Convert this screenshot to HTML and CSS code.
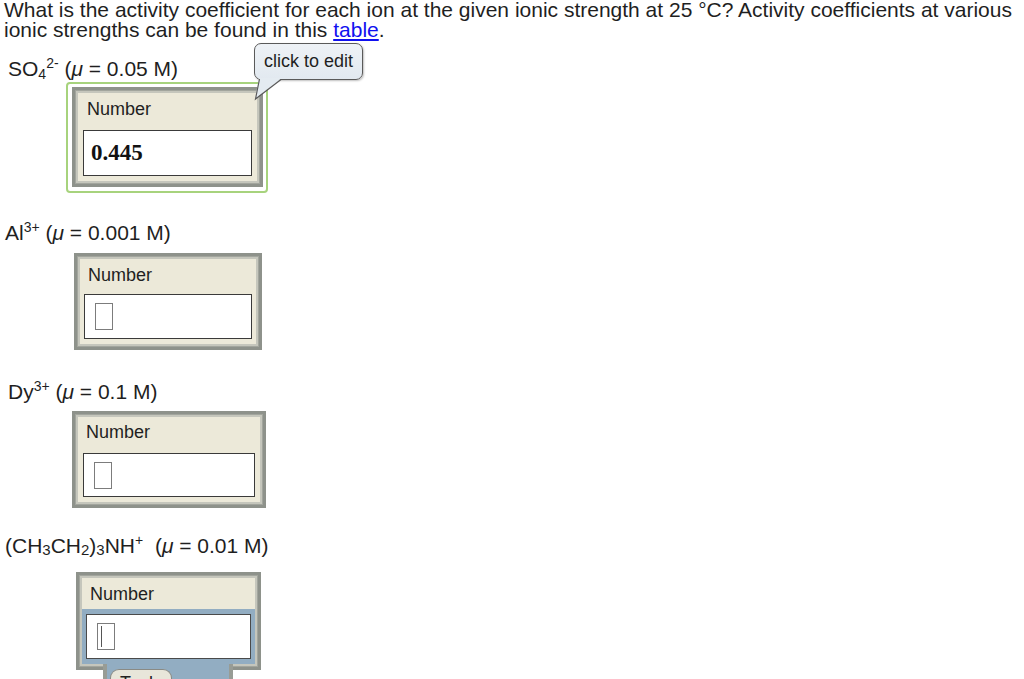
FILE: index.html
```html
<!DOCTYPE html>
<html>
<head>
<meta charset="utf-8">
<link rel="stylesheet" href="styles.css">
</head>
<body>
<div class="page">
  <p class="question">What is the activity coefficient for each ion at the given ionic strength at 25 °C? Activity coefficients at various ionic strengths can be found in this <a class="link" href="#">table</a>.</p>

  <div class="item item-1">
    <div class="label label-1">SO<sub>4</sub><sup>2-</sup> (<i>μ</i> = 0.05 M)</div>
    <div class="ring">
      <div class="numbox box-1">
        <div class="numlabel">Number</div>
        <div class="inputwrap"><div class="input input-1"><span class="value">0.445</span></div></div>
      </div>
    </div>
    <div class="bubble">click to edit</div>
    <svg class="tail" width="34" height="24" viewBox="0 0 34 24">
      <polygon points="7,0 3,21 30,0" fill="#e4ebf1"/>
      <polyline points="7.5,1 3.5,21 29,1.5" fill="none" stroke="#5a5a5a" stroke-width="1.2"/>
    </svg>
  </div>

  <div class="item">
    <div class="label label-2">Al<sup>3+</sup> (<i>μ</i> = 0.001 M)</div>
    <div class="numbox box-2">
      <div class="numlabel">Number</div>
      <div class="inputwrap"><div class="input input-2"><span class="caretbox"></span></div></div>
    </div>
  </div>

  <div class="item">
    <div class="label label-3">Dy<sup>3+</sup> (<i>μ</i> = 0.1 M)</div>
    <div class="numbox box-3">
      <div class="numlabel">Number</div>
      <div class="inputwrap"><div class="input input-3"><span class="caretbox"></span></div></div>
    </div>
  </div>

  <div class="item">
    <div class="label label-4">(CH<span class="lowsub">3</span>CH<span class="lowsub">2</span>)<span class="lowsub">3</span>NH<sup>+</sup>&nbsp; (<i>μ</i> = 0.01 M)</div>
    <div class="numbox box-4">
      <div class="numlabel">Number</div>
      <div class="inputwrap active"><div class="input input-4"><span class="caretbox"><span class="caret"></span></span></div></div>
    </div>
    <div class="tab">
      <div class="tools">Tools</div>
    </div>
  </div>
</div>
</body>
</html>
```

FILE: styles.css
```css
html, body {
  margin: 0;
  padding: 0;
  background: #ffffff;
}

.page {
  padding: 0 0 0 4px;
  font-family: "Liberation Sans", Arial, sans-serif;
  color: #1f1f1f;
}

.question {
  margin: 0;
  font-size: 21px;
  line-height: 20px;
}

.link {
  color: #1010f0;
  text-decoration: underline;
}

.item {
  position: relative;
  display: flow-root;
}

.label {
  font-size: 21px;
  line-height: 20px;
  white-space: nowrap;
}

.label sub,
.label sup {
  font-size: 14px;
  line-height: 0;
}

.label sup {
  vertical-align: 8px;
}

.label sub {
  vertical-align: -3px;
}

.lowsub {
  font-size: 15px;
  vertical-align: -2px;
  line-height: 0;
}

.label-1 { margin: 19px 0 0 4px; }
.label-2 { margin: 30px 0 0 1px; }
.label-3 { margin: 32px 0 0 4px; }
.label-4 { margin: 28px 0 0 1px; }

.ring {
  width: fit-content;
  margin: 3px 0 0 62px;
  border: 2px solid #a7d37d;
  border-radius: 4px;
  padding: 3px 3px 4px 4px;
}

.numbox {
  box-sizing: border-box;
  border: 3px solid #8e928b;
  box-shadow: inset 0 0 0 1px #a2a59d, inset 0 0 0 3px #c5c6bc;
  background: #ece9d9;
  padding: 3px;
}

.box-1 { width: 191px; }
.box-2 { width: 188px; margin: 10px 0 0 70px; }
.box-3 { width: 194px; margin: 9px 0 0 68px; }
.box-4 { width: 185px; margin: 16px 0 0 72px; }

.numlabel {
  font-size: 18px;
  line-height: 20px;
  padding: 6px 0 11px 9px;
  color: #1f1f1f;
}

.box-2 .numlabel { padding-bottom: 9px; padding-left: 8px; }
.box-3 .numlabel { padding-top: 5px; padding-left: 8px; }
.box-4 .numlabel { padding-bottom: 5px; padding-left: 8px; }

.inputwrap {
  padding: 0 5px 5px 5px;
}

.box-2 .inputwrap { padding: 0 4px 5px 4px; }
.box-3 .inputwrap { padding: 0 5px 5px 5px; }

.inputwrap.active {
  background: #92adc2;
  padding: 5px 4px 5px 4px;
}

.input {
  box-sizing: border-box;
  height: 46px;
  border: 1px solid #3a3a3a;
  background: #ffffff;
  display: flex;
  align-items: center;
  padding-left: 10px;
}

.input-2 { height: 45px; }
.input-3 { height: 44px; }
.input-4 { height: 45px; border-color: #4a4a4a; }

.value {
  font-family: "Liberation Serif", "Times New Roman", serif;
  font-weight: bold;
  font-size: 23px;
  color: #111;
  margin-left: -3px;
}

.caretbox {
  box-sizing: border-box;
  width: 18px;
  height: 27px;
  border: 1px solid #7c7c7c;
  position: relative;
}

.caret {
  position: absolute;
  left: 3px;
  top: 2px;
  width: 1px;
  height: 21px;
  background: #555;
}

.bubble {
  position: absolute;
  left: 250px;
  top: 3px;
  box-sizing: border-box;
  width: 109px;
  height: 37px;
  border: 1px solid #5a5a5a;
  border-radius: 7px;
  background: linear-gradient(#eef2f6, #e2e9f0);
  box-shadow: 1px 1px 2px rgba(0, 0, 0, 0.25);
  font-size: 18px;
  line-height: 35px;
  text-align: center;
  color: #1f1f1f;
}

.tail {
  position: absolute;
  left: 248px;
  top: 38px;
}

.tab {
  position: relative;
  box-sizing: border-box;
  width: 130px;
  height: 24px;
  margin: -6px 0 0 99px;
  border-left: 4px solid #989c95;
  border-right: 4px solid #989c95;
  background: #92adc2;
  padding: 5px 0 0 3px;
}

.tools {
  width: 62px;
  height: 24px;
  box-sizing: border-box;
  border: 1px solid #8a8a84;
  border-bottom: none;
  border-radius: 9px 9px 0 0;
  background: #e8e6da;
  font-size: 18px;
  line-height: 20px;
  padding-top: 3px;
  text-align: center;
  color: #222;
}
```
